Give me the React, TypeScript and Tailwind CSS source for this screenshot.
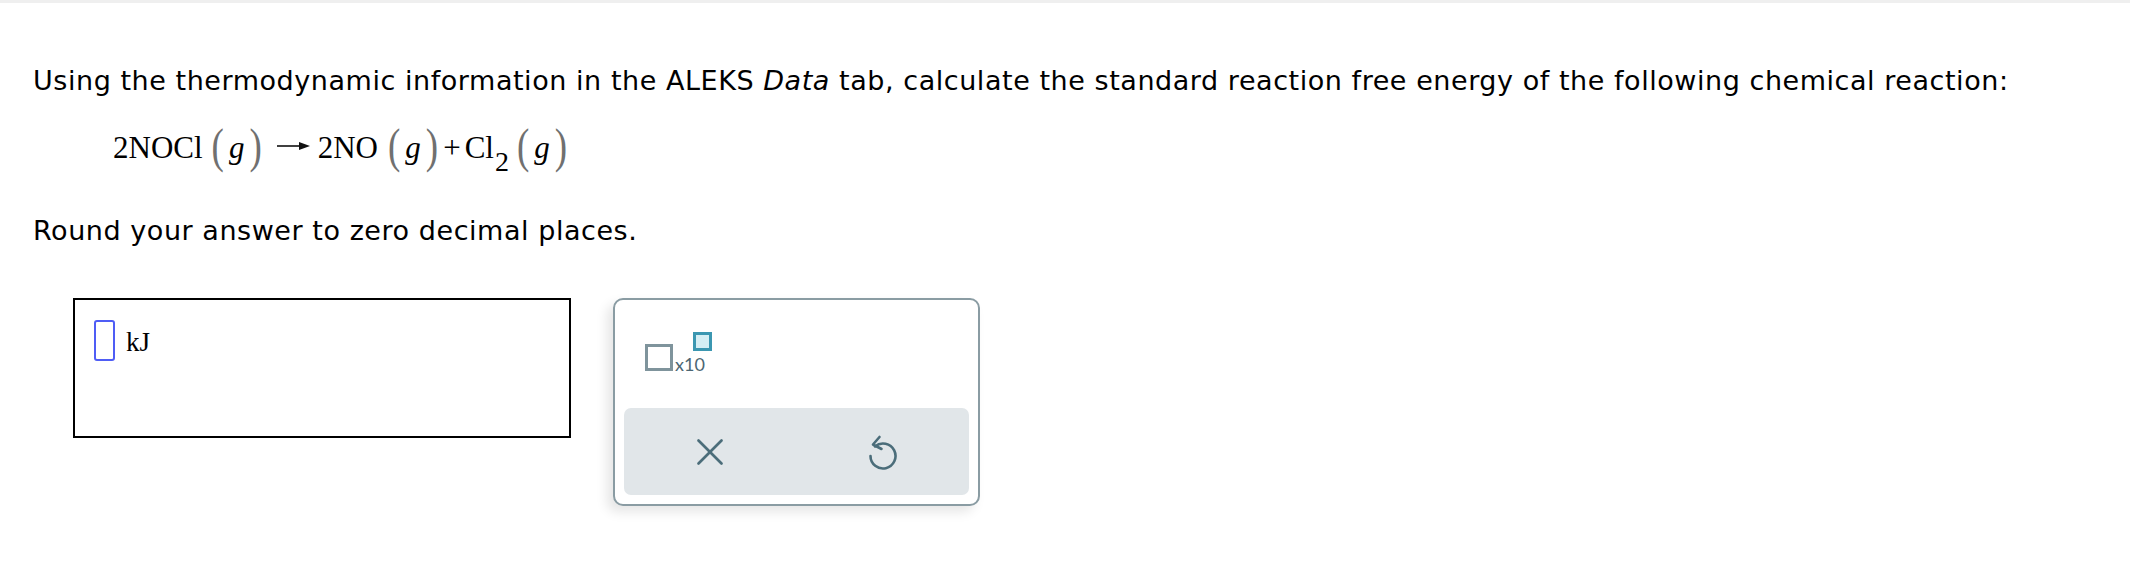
import React from 'react';

const sans = { fontFamily: '"DejaVu Sans", Verdana, sans-serif' };
const serif = { fontFamily: '"Liberation Serif", "Times New Roman", serif' };

function Paren({ children }: { children: React.ReactNode }) {
  return (
    <span className="inline-block scale-y-[1.3] text-[37px] leading-[40px] text-[#707070]">{children}</span>
  );
}

function Gas({ left = 4 }: { left?: number }) {
  return (
    <span className="inline-flex items-baseline" style={{ marginLeft: left }}>
      <Paren>(</Paren>
      <span className="mx-[5px] text-[31px] italic">g</span>
      <Paren>)</Paren>
    </span>
  );
}

function Equation() {
  return (
    <div className="ml-[80px] mt-[27px] flex h-[40px] items-baseline text-[31px] leading-[40px] text-black" style={serif}>
      <span>2NOCl</span>
      <Gas left={9} />
      <span className="ml-[15px] mr-[8px] self-center">
        <svg width="33" height="10" viewBox="0 0 33 10">
          <line x1="0" y1="5" x2="24" y2="5" stroke="#111" strokeWidth="1.6" />
          <path d="M22 1 L33 5 L22 9 Z" fill="#111" />
        </svg>
      </span>
      <span>2NO</span>
      <Gas left={10} />
      <span className="ml-[5px]">+</span>
      <span className="ml-[4px]">Cl</span>
      <span className="relative top-[13px] ml-[1px] text-[28px]">2</span>
      <Gas left={8} />
    </div>
  );
}

function AnswerBox() {
  return (
    <div className="h-[140px] w-[498px] border-2 border-black bg-white">
      <div className="ml-[19px] mt-[20px] flex items-start">
        <div className="h-[41px] w-[21px] rounded-[3px] border-2 border-[#4f5df5]" />
        <span className="ml-[11px] mt-[9px] text-[27px] leading-[27px] text-black" style={serif}>
          kJ
        </span>
      </div>
    </div>
  );
}

function UndoIcon() {
  return (
    <svg width="30" height="36" viewBox="0 0 30 36" fill="none" stroke="#4b6d7a" strokeWidth="2.6" strokeLinecap="round" strokeLinejoin="round">
      <path d="M7 12.4 A12.5 12.5 0 1 1 2.5 22" />
      <path d="M11.5 3 L5 10.5 L13.5 15" />
    </svg>
  );
}

function Palette() {
  return (
    <div className="flex h-[208px] w-[367px] flex-col rounded-[10px] border-2 border-[#8a9ca3] bg-white px-[9px] pb-[9px] shadow-[-6px_6px_12px_rgba(0,0,0,0.10)]">
      <div className="flex flex-1 items-start pl-[21px] pt-[44px]">
        <div className="relative flex items-end">
          <div className="h-[27px] w-[28px] border-[3px] border-[#7f949c]" />
          <span className="mb-[-3px] ml-[2px] text-[18px] leading-[20px] text-[#4c6673]" style={{ fontFamily: 'Lato, "Open Sans", sans-serif' }}>
            x10
          </span>
          <div className="absolute left-[48px] top-[-12px] h-[19px] w-[19px] border-[3px] border-[#3b97b1] bg-[#d5eef4]" />
        </div>
      </div>
      <div className="grid h-[87px] grid-cols-2 rounded-[7px] bg-[#e1e6e9]">
        <div className="flex items-center justify-center">
          <svg width="26" height="26" viewBox="0 0 26 26" stroke="#4b6d7a" strokeWidth="2.6" strokeLinecap="round">
            <line x1="1.5" y1="1.5" x2="24.5" y2="24.5" />
            <line x1="24.5" y1="1.5" x2="1.5" y2="24.5" />
          </svg>
        </div>
        <div className="flex items-center justify-center">
          <UndoIcon />
        </div>
      </div>
    </div>
  );
}

export default function App() {
  return (
    <div className="min-h-[574px] w-full bg-white">
      <div className="h-[3px] w-full bg-[#efefef]" />
      <div className="pl-[33px]">
        <p className="mt-[60px] text-[27px] leading-[36px] tracking-[0.55px] text-black" style={sans}>
          Using the thermodynamic information in the ALEKS <i>Data</i> tab, calculate the standard reaction free energy of the following chemical reaction:
        </p>
        <Equation />
        <p className="mt-[47px] text-[27px] leading-[36px] tracking-[0.55px] text-black" style={sans}>
          Round your answer to zero decimal places.
        </p>
        <div className="ml-[40px] mt-[49px] flex items-start gap-[42px]">
          <AnswerBox />
          <Palette />
        </div>
      </div>
    </div>
  );
}
